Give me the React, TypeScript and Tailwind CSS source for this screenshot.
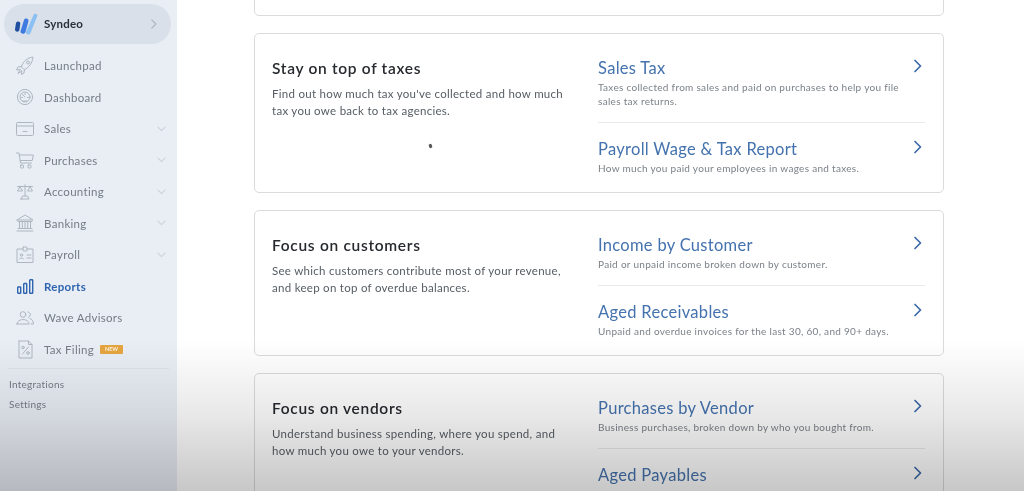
import React from "react";

const Chevron = ({ className = "" }: { className?: string }) => (
  <svg width="10" height="14" viewBox="0 0 10 14" fill="none" stroke="currentColor" strokeWidth="1.7" strokeLinecap="round" strokeLinejoin="round" className={className}>
    <path d="M2 1.5 7.5 7 2 12.5" />
  </svg>
);

const Down = () => (
  <svg width="9" height="6" viewBox="0 0 9 6" fill="none" stroke="#cdd2d9" strokeWidth="1.1" strokeLinecap="round" strokeLinejoin="round" className="mr-[11px] ml-auto">
    <path d="M1 1.2 4.5 4.6 8 1.2" />
  </svg>
);

const s = { fill: "none", stroke: "#afb6c0", strokeWidth: 1, strokeLinecap: "round" as const, strokeLinejoin: "round" as const };

const icons: Record<string, React.ReactNode> = {
  rocket: (
    <svg width="20" height="20" viewBox="0 0 20 20" {...s}>
      <path d="M6.500 10.500 C8 5.500 12 2 18 1 C17.500 7 14 11.500 9.500 13.500 Z" />
      <circle cx="13" cy="6.500" r="1.500" />
      <path d="M6.500 10.500 3 11 1.500 14 5.200 13.600M9.500 13.500 9 17 6.500 18.500 6.800 15M5.200 13.600 3 17.500 6.800 15" />
    </svg>
  ),
  dash: (
    <svg width="18" height="18" viewBox="0 0 18 18" {...s}>
      <circle cx="9" cy="9" r="7.600" />
      <circle cx="9" cy="9" r="5" />
      <path d="M9 9 6.500 6.500M5.500 9.500h1M11.500 9.500h1M9 5.500v1M7 13h4" />
    </svg>
  ),
  card: (
    <svg width="18" height="14" viewBox="0 0 18 14" {...s}>
      <rect x="0.500" y="0.500" width="17" height="13" rx="1" />
      <path d="M0.500 4h17M7 9.500h4" />
    </svg>
  ),
  cart: (
    <svg width="18" height="17" viewBox="0 0 18 17" {...s}>
      <path d="M0.500 1h2.500l1.500 10h11M3.300 3h14l-1 5.500H4.300" />
      <rect x="4.500" y="13" width="3" height="3" rx="0.600" />
      <rect x="12" y="13" width="3" height="3" rx="0.600" />
    </svg>
  ),
  scale: (
    <svg width="18" height="16" viewBox="0 0 18 16" {...s}>
      <path d="M9 0.800v11M1.500 2.500h15M4 2.500 1.500 7h5L4 2.500ZM14 2.500 11.500 7h5L14 2.500ZM5 15h8l-1.500-3h-5L5 15Z" />
    </svg>
  ),
  bank: (
    <svg width="18" height="18" viewBox="0 0 18 18" {...s}>
      <path d="M1 6 9 1l8 5H1ZM2 7.500h14M3.500 8v6M6.300 8v6M9 8v6M11.700 8v6M14.500 8v6M2 14.500h14M1 17h16" />
    </svg>
  ),
  payroll: (
    <svg width="18" height="17" viewBox="0 0 18 17" {...s}>
      <path d="M7 3H1v13.500h16V3h-6" />
      <rect x="7" y="1" width="4" height="4" rx="0.500" />
      <circle cx="5.500" cy="9" r="1.200" />
      <path d="M3.500 13c.3-1.500 3.700-1.500 4 0M11 9h4M11 12h4" />
    </svg>
  ),
  bars: (
    <svg width="17" height="15" viewBox="0 0 17 15" fill="none" stroke="#2f64ae" strokeWidth="1.400">
      <rect x="0.700" y="8" width="3" height="6.300" rx="0.600" />
      <rect x="6.700" y="4.500" width="3" height="9.800" rx="0.600" />
      <rect x="12.700" y="0.700" width="3" height="13.600" rx="0.600" />
    </svg>
  ),
  people: (
    <svg width="18" height="14" viewBox="0 0 18 14" {...s}>
      <circle cx="7" cy="3.500" r="2.800" />
      <path d="M1 13c0-6 12-6 12 0H1ZM12 1c2.600 0 3.500 4 .5 5.300M14 7.500c2 .5 3.400 2.500 3.400 5.500H15" />
    </svg>
  ),
  tax: (
    <svg width="15" height="19" viewBox="0 0 15 19" {...s}>
      <path d="M1 1h9.500L14 4.500V18H1V1ZM10.500 1v3.500H14" />
      <circle cx="5" cy="7.500" r="1.300" />
      <circle cx="10" cy="13" r="1.300" />
      <path d="M10.500 7 4.500 14" />
    </svg>
  ),
};

const nav: { label: string; icon: string; more?: boolean; active?: boolean; badge?: boolean }[] = [
  { label: "Launchpad", icon: "rocket" },
  { label: "Dashboard", icon: "dash" },
  { label: "Sales", icon: "card", more: true },
  { label: "Purchases", icon: "cart", more: true },
  { label: "Accounting", icon: "scale", more: true },
  { label: "Banking", icon: "bank", more: true },
  { label: "Payroll", icon: "payroll", more: true },
  { label: "Reports", icon: "bars", active: true },
  { label: "Wave Advisors", icon: "people" },
  { label: "Tax Filing", icon: "tax", badge: true },
];

const Row = ({ title, desc, last, h }: { title: string; desc: string[]; last?: boolean; h: string }) => (
  <div className={`${h} ${last ? "" : "border-b border-[#e8eaed]"} flex flex-col`}>
    <div className="flex items-start justify-between">
      <span className="text-[16.5px] leading-[22px] tracking-[0.3px] text-[#4472ae]">{title}</span>
      <Chevron className="mt-[2px] mr-[2px] text-[#3d69a8]" />
    </div>
    <div className="mt-[1px] text-[10px] leading-[14px] tracking-[0.3px] text-[#7b8188]">
      {desc.map((d) => (
        <div key={d} className="whitespace-nowrap">{d}</div>
      ))}
    </div>
  </div>
);

const Card = ({ title, desc, h, children }: { title: string; desc: string[]; h: string; children: React.ReactNode }) => (
  <section className={`${h} flex shrink-0 rounded-[5px] border border-[#d9dbde] bg-white`}>
    <div className="w-[325px] pl-[17px] pt-[24px]">
      <h2 className="text-[15.5px] leading-[20px] font-semibold tracking-[0.7px] text-[#26292e]">{title}</h2>
      <div className="mt-[8px] text-[11.5px] leading-[16.500px] tracking-[0.28px] text-[#565c63]">
        {desc.map((d) => (
          <div key={d} className="whitespace-nowrap">{d}</div>
        ))}
      </div>
    </div>
    <div className="ml-[18px] w-[327px] pt-[23px]">{children}</div>
  </section>
);

export default function App() {
  return (
    <div className="relative flex h-[491px] w-[1024px] overflow-hidden bg-white font-['Lato','Open_Sans',sans-serif] blur-[0.4px]">
      <aside className="flex h-full w-[177px] shrink-0 flex-col bg-[#e9eef5]">
        <div className="mx-[4px] mt-[4px] flex h-[40px] w-[167px] items-center rounded-full bg-[#d9e0ea] pl-[10px]">
          <svg width="25" height="23" viewBox="0 0 25 23">
            <path d="M2 10c.8-2.300 4.500-2 4.300.7L5.400 17c-.6 2.500-4.700 2-4.400-.7Z" fill="#1f4f9e" />
            <path d="M10 7c1-2.300 5-1.700 4.500 1L11.500 19c-.9 2.800-5.400 2-5-.8Z" fill="#3f7ae0" />
            <path d="M19.500 2c1-2 4.400-1.200 3.800 1L16.500 20c-1 2.600-5 1.700-4.500-1Z" fill="#8cc0f2" />
          </svg>
          <span className="ml-[5px] text-[11.5px] font-bold tracking-[0.2px] text-[#2a3038]">Syndeo</span>
          <Chevron className="ml-auto mr-[12px] scale-75 text-[#b0b7c0]" />
        </div>
        <nav className="mt-[6px] flex flex-col">
          {nav.map((n) => (
            <div key={n.label} className="flex h-[31.500px] items-center pl-[15px]">
              <span className="flex w-[20px] justify-center">{icons[n.icon]}</span>
              <span className={`ml-[9px] text-[11.5px] tracking-[0.3px] ${n.active ? "font-bold text-[#2f64ae]" : "text-[#757c85]"}`}>{n.label}</span>
              {n.badge && (
                <span className="ml-[6px] flex h-[9px] w-[23px] items-center justify-center rounded-[1px] bg-[#e5a53f] text-[5.5px] font-bold leading-none text-[#fdf4e0]">NEW</span>
              )}
              {n.more && <Down />}
            </div>
          ))}
        </nav>
        <div className="mx-[8px] mt-[3px] h-px bg-[#dfe4ea]" />
        <div className="mt-[6px] pl-[9px] text-[10px] leading-[19.500px] tracking-[0.25px] text-[#757c85]">
          <div>Integrations</div>
          <div>Settings</div>
        </div>
      </aside>
      <main className="-mt-[84px] flex h-full flex-1 flex-col gap-[17px] pr-[80px] pl-[77px]">
        <section className="h-[100px] shrink-0 rounded-[5px] border border-[#d9dbde] bg-white" />
        <Card title="Stay on top of taxes" desc={["Find out how much tax you've collected and how much", "tax you owe back to tax agencies."]} h="h-[160px]">
          <Row h="h-[66px]" title="Sales Tax" desc={["Taxes collected from sales and paid on purchases to help you file", "sales tax returns."]} />
          <div className="h-[15px]" />
          <Row h="h-[40px]" last title="Payroll Wage & Tax Report" desc={["How much you paid your employees in wages and taxes."]} />
        </Card>
        <Card title="Focus on customers" desc={["See which customers contribute most of your revenue,", "and keep on top of overdue balances."]} h="h-[146px]">
          <Row h="h-[52px]" title="Income by Customer" desc={["Paid or unpaid income broken down by customer."]} />
          <div className="h-[15px]" />
          <Row h="h-[40px]" last title="Aged Receivables" desc={["Unpaid and overdue invoices for the last 30, 60, and 90+ days."]} />
        </Card>
        <Card title="Focus on vendors" desc={["Understand business spending, where you spend, and", "how much you owe to your vendors."]} h="h-[146px]">
          <Row h="h-[52px]" title="Purchases by Vendor" desc={["Business purchases, broken down by who you bought from."]} />
          <div className="h-[15px]" />
          <Row h="h-[40px]" last title="Aged Payables" desc={["Unpaid bills and overdue bills for the last 30, 60, and 90+ days."]} />
        </Card>
      </main>
      <div className="absolute top-[144px] left-[429px] h-[4px] w-[3px] rotate-[-20deg] rounded-[1px] bg-[#555]" />
      <div className="pointer-events-none absolute inset-x-0 bottom-0 h-[151px] bg-gradient-to-b from-transparent via-[#00000017] to-[#00000038]" />
    </div>
  );
}
